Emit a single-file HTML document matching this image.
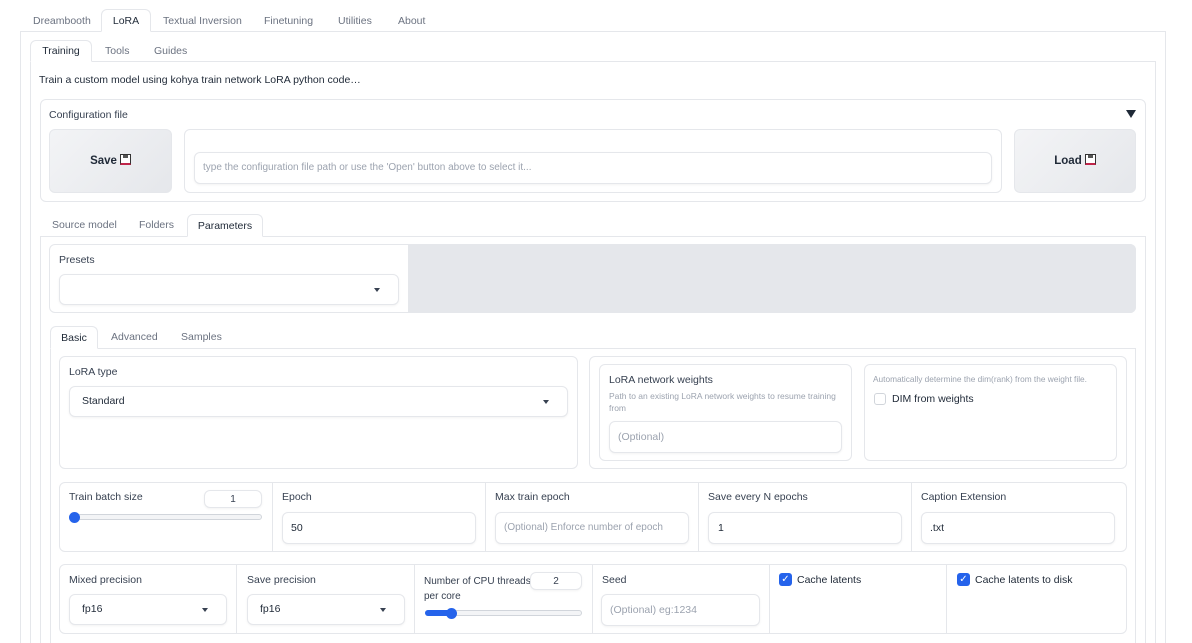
<!DOCTYPE html>
<html><head><style>
*{box-sizing:border-box;margin:0;padding:0}
html,body{width:1192px;height:643px;overflow:hidden}
body{background:#fff;font-family:"Liberation Sans",sans-serif;font-size:10.5px;color:#374151;position:relative}
.a{position:absolute}
.b{position:absolute;border:1px solid #e5e7eb;border-radius:6px;background:#fff}
.o{border-bottom:none;border-radius:0}
.t{position:absolute;color:#6b7280;font-size:10.5px}
.sel{position:absolute;border:1px solid #e5e7eb;border-radius:6px;background:#fff;box-shadow:0 1px 2px rgba(0,0,0,.05)}
.car{position:absolute;right:18px;top:13px;width:0;height:0;border-left:3px solid transparent;border-right:3px solid transparent;border-top:4px solid #374151}
.tab{position:absolute;border:1px solid #e5e7eb;border-bottom:1px solid #fff;border-radius:6px 6px 0 0;background:#fff;color:#1f2937;text-align:center}
.ph{color:#9ca3af}
.fl{display:inline-block;width:11px;height:11px;border:1.5px solid #333;border-bottom:2px solid #c0264a;vertical-align:-1px;margin-left:3px;background:#fff;position:relative}
.fl:before{content:"";position:absolute;left:2px;top:0;width:5px;height:3px;background:#555}
.btn{position:absolute;border:1px solid #e5e7eb;border-radius:6px;background:linear-gradient(135deg,#f3f4f6,#e5e7eb);font-size:11.5px;font-weight:bold;color:#1f2937;text-align:center}
.cb{position:absolute;width:13px;height:13px;border-radius:3px;background:#2563eb;color:#fff;font-size:10px;line-height:13px;text-align:center}
</style></head><body>
<div class="t" style="left:33px;top:15px">Dreambooth</div>
<div class="b o" style="left:20px;top:31px;width:1146px;height:612px"></div>
<div class="tab" style="left:101px;top:9px;width:50px;height:23px;line-height:22px">LoRA</div>
<div class="t" style="left:163px;top:15px">Textual Inversion</div>
<div class="t" style="left:264px;top:15px">Finetuning</div>
<div class="t" style="left:338px;top:15px">Utilities</div>
<div class="t" style="left:398px;top:15px">About</div>

<div class="b o" style="left:30px;top:61px;width:1126px;height:582px"></div>
<div class="tab" style="left:30px;top:40px;width:62px;height:22px;line-height:21px">Training</div>
<div class="t" style="left:105px;top:45px">Tools</div>
<div class="t" style="left:154px;top:45px">Guides</div>
<div class="a" style="left:39px;top:74px;color:#1f2937">Train a custom model using kohya train network LoRA python code…</div>

<div class="b" style="left:40px;top:99px;width:1106px;height:103px"></div>
<div class="a" style="left:49px;top:109px;color:#374151">Configuration file</div>
<div class="a" style="left:1126px;top:110px;width:0;height:0;border-left:5px solid transparent;border-right:5px solid transparent;border-top:8px solid #1f2937"></div>
<div class="btn" style="left:49px;top:129px;width:123px;height:64px;line-height:62px">Save<span class="fl"></span></div>
<div class="b" style="left:184px;top:129px;width:818px;height:64px"></div>
<div class="sel" style="left:194px;top:152px;width:798px;height:32px;line-height:30px;padding-left:8px;font-size:10px"><span class="ph">type the configuration file path or use the 'Open' button above to select it...</span></div>
<div class="btn" style="left:1014px;top:129px;width:122px;height:64px;line-height:62px">Load<span class="fl"></span></div>

<div class="b o" style="left:40px;top:236px;width:1106px;height:407px"></div>
<div class="t" style="left:52px;top:219px">Source model</div>
<div class="t" style="left:139px;top:219px">Folders</div>
<div class="tab" style="left:187px;top:214px;width:76px;height:23px;line-height:22px">Parameters</div>

<div class="b" style="left:49px;top:244px;width:1087px;height:69px"></div>
<div class="a" style="left:408px;top:244px;width:728px;height:69px;background:#e5e7eb;border-radius:0 6px 6px 0"></div>
<div class="a" style="left:59px;top:254px">Presets</div>
<div class="sel" style="left:59px;top:274px;width:340px;height:31px"><div class="car"></div></div>

<div class="b o" style="left:50px;top:348px;width:1086px;height:295px"></div>
<div class="tab" style="left:50px;top:326px;width:48px;height:23px;line-height:22px">Basic</div>
<div class="t" style="left:111px;top:331px">Advanced</div>
<div class="t" style="left:181px;top:331px">Samples</div>

<div class="b" style="left:59px;top:356px;width:519px;height:113px"></div>
<div class="a" style="left:69px;top:366px">LoRA type</div>
<div class="sel" style="left:69px;top:386px;width:499px;height:31px;line-height:29px;padding-left:12px;color:#1f2937">Standard<div class="car"></div></div>

<div class="b" style="left:589px;top:356px;width:538px;height:113px"></div>
<div class="b" style="left:599px;top:364px;width:253px;height:97px"></div>
<div class="a" style="left:609px;top:374px;color:#374151">LoRA network weights</div>
<div class="a" style="left:609px;top:390px;font-size:8.5px;color:#9ca3af;width:240px;line-height:12px">Path to an existing LoRA network weights to resume training from</div>
<div class="sel" style="left:609px;top:421px;width:233px;height:32px;line-height:30px;padding-left:8px"><span class="ph">(Optional)</span></div>
<div class="b" style="left:864px;top:364px;width:253px;height:97px"></div>
<div class="a" style="left:873px;top:374px;font-size:8.3px;color:#9ca3af">Automatically determine the dim(rank) from the weight file.</div>
<div class="a" style="left:874px;top:393px;width:12px;height:12px;border:1px solid #d1d5db;border-radius:3px"></div>
<div class="a" style="left:892px;top:393px;color:#1f2937">DIM from weights</div>

<div class="b" style="left:59px;top:482px;width:1068px;height:70px"></div>
<div class="a" style="left:272px;top:483px;width:1px;height:68px;background:#e5e7eb"></div>
<div class="a" style="left:485px;top:483px;width:1px;height:68px;background:#e5e7eb"></div>
<div class="a" style="left:698px;top:483px;width:1px;height:68px;background:#e5e7eb"></div>
<div class="a" style="left:911px;top:483px;width:1px;height:68px;background:#e5e7eb"></div>
<div class="a" style="left:69px;top:491px">Train batch size</div>
<div class="sel" style="left:204px;top:490px;width:58px;height:18px;text-align:center;line-height:17px;font-size:10px">1</div>
<div class="a" style="left:69px;top:514px;width:193px;height:6px;border:1px solid #d1d5db;border-radius:3px;background:#f3f4f6"></div>
<div class="a" style="left:69px;top:512px;width:11px;height:11px;border-radius:50%;background:#2563eb"></div>
<div class="a" style="left:282px;top:491px">Epoch</div>
<div class="sel" style="left:282px;top:512px;width:194px;height:32px;line-height:30px;padding-left:8px;color:#1f2937">50</div>
<div class="a" style="left:495px;top:491px">Max train epoch</div>
<div class="sel" style="left:495px;top:512px;width:194px;height:32px;line-height:30px;padding-left:8px;font-size:10px"><span class="ph">(Optional) Enforce number of epoch</span></div>
<div class="a" style="left:708px;top:491px">Save every N epochs</div>
<div class="sel" style="left:708px;top:512px;width:194px;height:32px;line-height:30px;padding-left:9px;color:#1f2937">1</div>
<div class="a" style="left:921px;top:491px">Caption Extension</div>
<div class="sel" style="left:921px;top:512px;width:194px;height:32px;line-height:30px;padding-left:8px;color:#1f2937">.txt</div>

<div class="b" style="left:59px;top:564px;width:1068px;height:70px"></div>
<div class="a" style="left:236px;top:565px;width:1px;height:68px;background:#e5e7eb"></div>
<div class="a" style="left:414px;top:565px;width:1px;height:68px;background:#e5e7eb"></div>
<div class="a" style="left:592px;top:565px;width:1px;height:68px;background:#e5e7eb"></div>
<div class="a" style="left:769px;top:565px;width:1px;height:68px;background:#e5e7eb"></div>
<div class="a" style="left:946px;top:565px;width:1px;height:68px;background:#e5e7eb"></div>
<div class="a" style="left:69px;top:574px">Mixed precision</div>
<div class="sel" style="left:69px;top:594px;width:158px;height:31px;line-height:29px;padding-left:12px;color:#1f2937">fp16<div class="car"></div></div>
<div class="a" style="left:247px;top:574px">Save precision</div>
<div class="sel" style="left:247px;top:594px;width:158px;height:31px;line-height:29px;padding-left:12px;color:#1f2937">fp16<div class="car"></div></div>
<div class="a" style="left:424px;top:574px;width:110px;line-height:15px;font-size:10px;white-space:nowrap">Number of CPU threads<br>per core</div>
<div class="sel" style="left:530px;top:572px;width:52px;height:18px;text-align:center;line-height:17px;font-size:10px">2</div>
<div class="a" style="left:425px;top:610px;width:157px;height:6px;border:1px solid #d1d5db;border-radius:3px;background:#f3f4f6"></div>
<div class="a" style="left:425px;top:610px;width:27px;height:6px;border-radius:3px;background:#2563eb"></div>
<div class="a" style="left:446px;top:608px;width:11px;height:11px;border-radius:50%;background:#2563eb"></div>
<div class="a" style="left:602px;top:574px">Seed</div>
<div class="sel" style="left:601px;top:594px;width:159px;height:32px;line-height:30px;padding-left:8px"><span class="ph">(Optional) eg:1234</span></div>
<div class="cb" style="left:779px;top:573px">✓</div>
<div class="a" style="left:797px;top:574px;color:#1f2937">Cache latents</div>
<div class="cb" style="left:957px;top:573px">✓</div>
<div class="a" style="left:975px;top:574px;color:#1f2937">Cache latents to disk</div>
</body></html>
